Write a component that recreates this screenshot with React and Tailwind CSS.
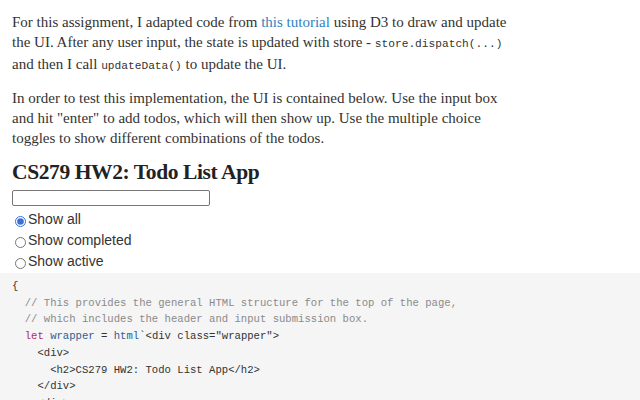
import React, { useState } from 'react';

const serif = { fontFamily: '"Liberation Serif", serif' };

const App = () => {
  const [filter, setFilter] = useState('all');
  const [todo, setTodo] = useState('');

  return (
    <div className="w-[640px] h-[400px] overflow-hidden bg-white text-[#333]">
      {/* Notebook prose */}
      <div className="px-3 pt-[12px] text-[15px] leading-[20px] whitespace-nowrap" style={serif}>
        <p>
          For this assignment, I adapted code from{' '}
          <a href="#" className="text-[#3182bd]">this tutorial</a> using D3 to draw and update
          <br />
          the UI. After any user input, the state is updated with store -{' '}
          <code className="font-['Liberation_Mono',monospace] text-[11.2px]">store.dispatch(...)</code>
          <br />
          and then I call{' '}
          <code className="font-['Liberation_Mono',monospace] text-[11.2px]">updateData()</code> to
          update the UI.
        </p>
        <p className="mt-[12px]">
          In order to test this implementation, the UI is contained below. Use the input box
          <br />
          and hit "enter" to add todos, which will then show up. Use the multiple choice
          <br />
          toggles to show different combinations of the todos.
        </p>
      </div>

      {/* Rendered app */}
      <div className="px-3">
        <h2 className="mt-[9px] text-[21.5px] leading-[30px] tracking-[-0.4px] font-bold text-[#222]" style={serif}>
          CS279 HW2: Todo List App
        </h2>
        <input
          value={todo}
          onChange={e => setTodo(e.target.value)}
          className="mt-[3px] block w-[198px] h-[16px] border border-[#767676] rounded-[2px] bg-white"
        />
        <div className="mt-[3px] font-['Liberation_Sans',sans-serif] text-[14px] leading-[21px]">
          {[
            ['all', 'Show all'],
            ['completed', 'Show completed'],
            ['active', 'Show active'],
          ].map(([key, label]) => (
            <label key={key} className="flex items-center">
              <input
                type="radio"
                name="filter"
                checked={filter === key}
                onChange={() => setFilter(key)}
                className="ml-[3px] mr-[2px] mt-[3px] w-[11px] h-[11px] accent-[#3b6fd4]"
              />
              <span>{label}</span>
            </label>
          ))}
        </div>
      </div>

      {/* Code cell */}
      <pre className="mt-[1px] bg-[#f5f5f5] px-3 pt-[5px] font-['Liberation_Mono',monospace] text-[10.6px] leading-[16.7px] text-[#333]">
        {'{\n'}
        <span className="text-[#8a8a8a]">{'  // This provides the general HTML structure for the top of the page,\n'}</span>
        <span className="text-[#8a8a8a]">{'  // which includes the header and input submission box.\n'}</span>
        {'  '}
        <span className="text-[#b4286a]">let</span> <span className="text-[#2f5f8f]">wrapper</span> = <span className="text-[#2f5f8f]">html</span>
        {'`<div class="wrapper">\n'}
        {'    <div>\n'}
        {'      <h2>CS279 HW2: Todo List App</h2>\n'}
        {'    </div>\n'}
        {'    <div>\n'}
        {'      <input type="text">\n'}
      </pre>
    </div>
  );
};

export default App;
